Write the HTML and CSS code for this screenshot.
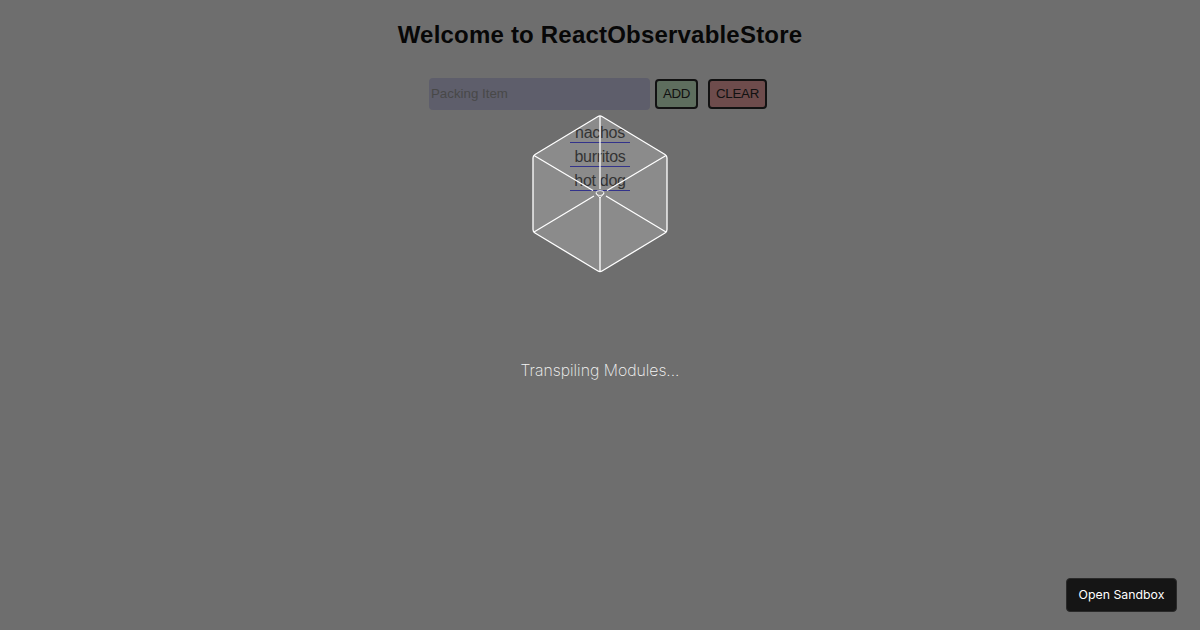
FILE: index.html
```html
<!DOCTYPE html>
<html lang="en">
<head>
  <meta charset="UTF-8">
  <meta name="viewport" content="width=device-width, initial-scale=1.0">
  <title>ReactObservableStore</title>
  <link rel="stylesheet" href="styles.css">
</head>
<body>
  <div class="app">
    <h1>Welcome to ReactObservableStore</h1>
    <div class="add-form">
      <input class="item-input" type="text" placeholder="Packing Item">
      <button class="btn btn-add">ADD</button>
      <button class="btn btn-clear">CLEAR</button>
    </div>
    <ul class="item-list">
      <li>nachos</li>
      <li>burritos</li>
      <li>hot dog</li>
    </ul>
  </div>

  <div class="loading-overlay">
    <svg class="cube" width="140" height="161" viewBox="0 0 140 161" fill="none">
      <path class="cube-fill" d="M68 3.500a4 4 0 0 1 4 0L135 41.500a4 4 0 0 1 2 3.500V116.500a4 4 0 0 1-2 3.500L72 158a4 4 0 0 1-4 0L5 120a4 4 0 0 1-2-3.500V45a4 4 0 0 1 2-3.500Z"/>
      <path class="cube-line" d="M68 3.500a4 4 0 0 1 4 0L135 41.500a4 4 0 0 1 2 3.500V116.500a4 4 0 0 1-2 3.500L72 158a4 4 0 0 1-4 0L5 120a4 4 0 0 1-2-3.500V45a4 4 0 0 1 2-3.500Z"/>
      <path class="cube-line" d="M70 3V76M70 84V158.500M4 42.500 63 77.500M136 42.500 77 77.500M4 119 64 83M136 119 76 83"/>
      <ellipse class="cube-line thin" cx="70" cy="80" rx="4" ry="2.500"/>
      <path class="cube-line thin" d="M66 80 70 85 74 80"/>
    </svg>
    <p class="loading-text">Transpiling Modules...</p>
  </div>

  <button class="open-sandbox">Open Sandbox</button>
</body>
</html>
```

FILE: styles.css
```css
body {
  font-family: "Liberation Sans", Arial, sans-serif;
  background-color: #fff;
  color: #000;
  margin: 0;
  height: 630px;
  overflow: hidden;
}

.app {
  display: flex;
  flex-direction: column;
  align-items: center;
}

h1 {
  font-size: 24px;
  line-height: 28px;
  letter-spacing: 0.2px;
  margin: 21px 0 29px;
  color: #111;
}

.add-form {
  display: flex;
  align-items: center;
  height: 32px;
  margin-left: -4px;
}

.item-input {
  box-sizing: border-box;
  width: 221px;
  height: 32px;
  padding: 0 2px 2px;
  background-color: #dadaf8;
  border: none;
  border-radius: 4px;
  font-family: "Liberation Sans", Arial, sans-serif;
  font-size: 13.3px;
}

.item-input::placeholder {
  color: #a8a8a8;
}

.btn {
  box-sizing: border-box;
  height: 30px;
  padding: 0 0 1px;
  border: 2px solid #2a2a2a;
  border-radius: 4px;
  font-family: "Liberation Sans", Arial, sans-serif;
  font-size: 13.33px;
  letter-spacing: -0.3px;
  color: #2a2a2a;
}

.btn-add {
  width: 43px;
  margin-left: 5px;
  background-color: #daffda;
}

.btn-clear {
  width: 59px;
  margin-left: 10px;
  background-color: #ffb1b1;
}

.item-list {
  list-style: none;
  margin: 9px 0 0;
  padding: 0;
}

.item-list li {
  box-sizing: border-box;
  width: 60px;
  height: 24px;
  padding-top: 4px;
  line-height: 20px;
  font-size: 16px;
  letter-spacing: -0.3px;
  white-space: nowrap;
  display: flex;
  justify-content: center;
  border-bottom: 1px solid #00f;
}

.loading-overlay {
  position: absolute;
  inset: 0;
  display: flex;
  flex-direction: column;
  align-items: center;
  padding-top: 113px;
  background-color: rgba(0, 0, 0, 0.57);
}

.cube {
  display: block;
}

.cube-fill {
  fill: rgba(255, 255, 255, 0.2);
}

.cube-line {
  stroke: #fff;
  stroke-width: 1.3;
  stroke-linejoin: round;
}

.cube-line.thin {
  stroke-width: 0.8;
}

.loading-text {
  margin: 87px 0 0;
  font-family: Inter, sans-serif;
  font-size: 15.8px;
  font-weight: 200;
  line-height: 20px;
  color: #f5f5f5;
}

.open-sandbox {
  position: absolute;
  right: 23px;
  bottom: 18px;
  width: 111px;
  height: 34px;
  padding: 0 0 1px;
  background-color: #151515;
  border: 1px solid #2a2a2a;
  border-radius: 4px;
  font-family: Inter, sans-serif;
  font-size: 12.3px;
  font-weight: 400;
  color: #fff;
}
```
